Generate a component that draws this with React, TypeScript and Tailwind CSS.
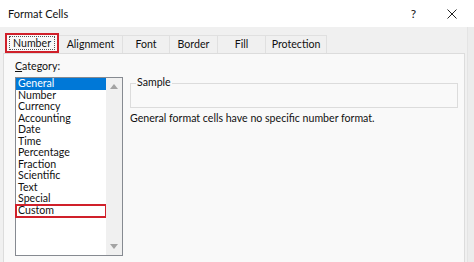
import React from "react";

const TABS: { label: string; w: string }[] = [
  { label: "Number", w: "w-[54px]" },
  { label: "Alignment", w: "w-[64px]" },
  { label: "Font", w: "w-[47px]" },
  { label: "Border", w: "w-[48px]" },
  { label: "Fill", w: "w-[48px]" },
  { label: "Protection", w: "w-[61px]" },
];

const CATEGORIES = [
  "General", "Number", "Currency", "Accounting", "Date", "Time",
  "Percentage", "Fraction", "Scientific", "Text", "Special", "Custom",
];

export default function App() {
  return (
    <div
      className="relative h-[262px] w-[474px] overflow-hidden bg-[#f0f0f0] text-[10.6px] text-[#111]"
      style={{ fontFamily: 'Lato, "Noto Sans", sans-serif' }}
    >
      {/* Title bar */}
      <div className="flex h-[27px] items-center bg-white pl-[8px]">
        <span className="text-[11px] leading-none">Format Cells</span>
        <span className="ml-auto mr-[31px] text-[12px] leading-none">?</span>
        <svg width="10" height="10" viewBox="0 0 10 10" className="mr-[17px]">
          <path d="M0.5 0.5 L9.5 9.5 M9.5 0.5 L0.5 9.5" stroke="#222" strokeWidth="1" />
        </svg>
      </div>

      {/* Tabs */}
      <div className="flex h-[26px] items-end pl-[5px]">
        {TABS.map((t, i) =>
          i === 0 ? (
            <div
              key={t.label}
              className={`${t.w} relative z-10 flex h-[20px] items-center justify-center border-2 border-[#d0202a] bg-[#f9f9f9]`}
            >
              <span className="border border-dotted border-[#555] px-[3px] leading-[12px]">{t.label}</span>
            </div>
          ) : (
            <div
              key={t.label}
              className={`${t.w} flex h-[18px] items-center justify-center border-r border-t border-[#e0e0e0] bg-[#f0f0f0]`}
            >
              {t.label}
            </div>
          )
        )}
      </div>

      {/* Panel */}
      <div className="ml-[3px] h-[240px] w-[462px] border border-[#dcdcdc] bg-[#f9f9f9] pl-[11px] pt-[5px]">
        <div className="flex">
          <div className="flex flex-col">
            <div className="h-[17px] leading-[14px]">
              <span className="underline">C</span>ategory:
            </div>
            <div className="mt-[1px] flex h-[179px] w-[108px] border border-[#868a91] bg-white">
              <div className="flex-1">
                {CATEGORIES.map((c, i) => (
                  <div
                    key={c}
                    className={
                      i === 0
                        ? "h-[11.5px] bg-[#0078d7] pl-[2px] leading-[11.5px] text-white"
                        : i === 11
                        ? "h-[12px] pl-[2px] leading-[11.5px] outline outline-2 outline-[#d0202a] -outline-offset-1"
                        : "h-[11.5px] pl-[2px] leading-[11.5px]"
                    }
                  >
                    {c}
                  </div>
                ))}
              </div>
              <div className="flex w-[16px] flex-col items-center justify-between bg-[#f0f0f0] py-[6px]">
                <svg width="8" height="5" viewBox="0 0 8 5">
                  <path d="M0 5 L4 0 L8 5 Z" fill="#a3a3a3" />
                </svg>
                <svg width="8" height="5" viewBox="0 0 8 5">
                  <path d="M0 0 L8 0 L4 5 Z" fill="#a3a3a3" />
                </svg>
              </div>
            </div>
          </div>

          <div className="ml-[7px] mt-[24px] flex flex-col">
            <div className="relative h-[25px] w-[328px] border border-[#dcdcdc]">
              <span className="absolute left-[5px] top-[-9px] bg-[#f9f9f9] px-[1px] leading-[14px]">Sample</span>
            </div>
            <div className="mt-[3px] leading-[14px]">General format cells have no specific number format.</div>
          </div>
        </div>
      </div>

      {/* right window edge */}
      <div className="absolute right-0 top-[27px] h-[235px] w-[7px] border-l border-[#e4e4e4] bg-[#ececec]" />
    </div>
  );
}
